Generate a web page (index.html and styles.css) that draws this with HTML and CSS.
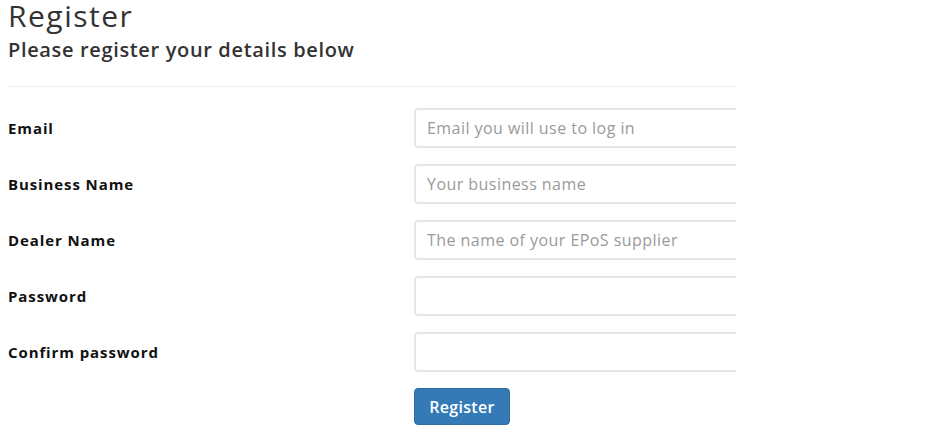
FILE: index.html
```html
<!DOCTYPE html>
<html>
<head>
<meta charset="utf-8">
<link rel="stylesheet" href="styles.css">
</head>
<body>
<div class="page">
  <h1 class="title">Register</h1>
  <h2 class="subtitle">Please register your details below</h2>
  <hr class="rule">
  <form class="form">
    <div class="row">
      <label class="label">Email</label>
      <input class="field" type="text" placeholder="Email you will use to log in">
    </div>
    <div class="row">
      <label class="label">Business Name</label>
      <input class="field" type="text" placeholder="Your business name">
    </div>
    <div class="row">
      <label class="label">Dealer Name</label>
      <input class="field" type="text" placeholder="The name of your EPoS supplier">
    </div>
    <div class="row">
      <label class="label">Password</label>
      <input class="field" type="password">
    </div>
    <div class="row">
      <label class="label">Confirm password</label>
      <input class="field" type="password">
    </div>
    <div class="row actions">
      <span class="label"></span>
      <button class="btn" type="button">Register</button>
    </div>
  </form>
</div>
</body>
</html>
```

FILE: styles.css
```css
html, body {
  margin: 0;
  padding: 0;
  background: #fff;
}
body {
  font-family: "Open Sans", "Noto Sans", sans-serif;
  color: #333;
}
.page {
  width: 728px;
  padding-left: 8px;
  padding-top: 0;
}
.title {
  margin: 0;
  font-size: 30px;
  font-weight: 400;
  line-height: 32px;
  letter-spacing: 1.5px;
  color: #333;
}
.subtitle {
  margin: 5px 0 0 0;
  font-size: 20px;
  font-weight: 600;
  line-height: 26px;
  letter-spacing: 0.65px;
  color: #333;
}
.rule {
  margin: 23px 0 0 0;
  border: 0;
  border-top: 1px solid #eee;
  height: 0;
}
.form {
  margin-top: 21px;
  display: flex;
  flex-direction: column;
  gap: 16px;
  overflow: hidden;
}
.row {
  display: flex;
  align-items: center;
}
.label {
  flex: 0 0 406px;
  font-family: "Open Sans", "Noto Sans", sans-serif;
  font-weight: 700;
  font-size: 15px;
  letter-spacing: 0.9px;
  color: #111;
}
.field {
  flex: 0 0 420px;
  box-sizing: border-box;
  height: 40px;
  margin: 0;
  padding: 0 11px;
  border: 2px solid #e6e6e6;
  border-radius: 4px;
  font-family: "Open Sans", "Noto Sans", sans-serif;
  font-size: 16px;
  letter-spacing: 0.45px;
  color: #555;
  background: #fff;
}
.field::placeholder {
  color: #9a9a9a;
}
.btn {
  box-sizing: border-box;
  width: 96px;
  height: 37px;
  padding: 0;
  border: 1px solid #2e6da4;
  border-radius: 4px;
  background: #337ab7;
  color: #fff;
  font-family: "Open Sans", "Noto Sans", sans-serif;
  font-size: 16px;
  font-weight: 600;
  letter-spacing: 0.3px;
}
```
